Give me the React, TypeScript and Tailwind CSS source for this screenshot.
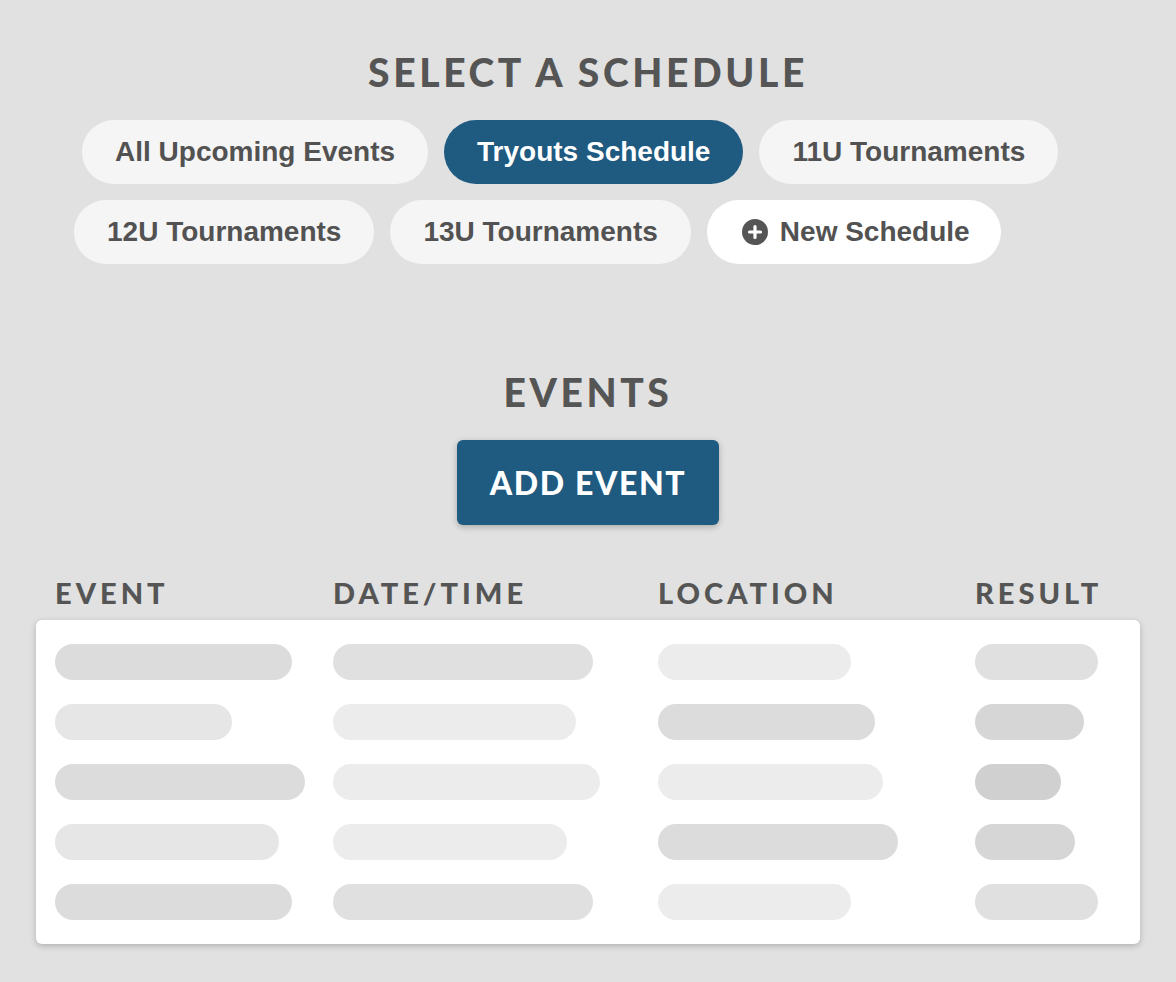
import React from "react";

const heading = "font-['Lato',sans-serif] font-black uppercase text-[#555555]";

function Pill({ label, active, white, icon }: { label: string; active?: boolean; white?: boolean; icon?: boolean }) {
  const base =
    "h-[64px] rounded-full flex items-center justify-center gap-[12px] font-['Liberation_Sans',Arial,sans-serif] font-bold text-[28px]";
  const color = active
    ? "bg-[#1f5a80] text-white"
    : white
    ? "bg-white text-[#525252]"
    : "bg-[#f5f5f5] text-[#525252]";
  return (
    <div className={`${base} ${color} ${icon ? "pl-[35px] pr-[31px]" : "px-[33px]"}`}>
      {icon && (
        <svg width="26" height="26" viewBox="0 0 26 26">
          <circle cx="13" cy="13" r="13" fill="#555555" />
          <path d="M13 7.5v11M7.5 13h11" stroke="#ffffff" strokeWidth="3.2" strokeLinecap="round" />
        </svg>
      )}
      <span>{label}</span>
    </div>
  );
}

const rows: { w: number; c: string }[][] = [
  [
    { w: 237, c: "bg-[#dcdcdc]" },
    { w: 260, c: "bg-[#e0e0e0]" },
    { w: 193, c: "bg-[#ececec]" },
    { w: 123, c: "bg-[#e0e0e0]" },
  ],
  [
    { w: 177, c: "bg-[#e6e6e6]" },
    { w: 243, c: "bg-[#ececec]" },
    { w: 217, c: "bg-[#dcdcdc]" },
    { w: 109, c: "bg-[#d6d6d6]" },
  ],
  [
    { w: 250, c: "bg-[#dcdcdc]" },
    { w: 267, c: "bg-[#ececec]" },
    { w: 225, c: "bg-[#ececec]" },
    { w: 86, c: "bg-[#d0d0d0]" },
  ],
  [
    { w: 224, c: "bg-[#e6e6e6]" },
    { w: 234, c: "bg-[#ececec]" },
    { w: 240, c: "bg-[#dcdcdc]" },
    { w: 100, c: "bg-[#d6d6d6]" },
  ],
  [
    { w: 237, c: "bg-[#dcdcdc]" },
    { w: 260, c: "bg-[#e0e0e0]" },
    { w: 193, c: "bg-[#ececec]" },
    { w: 123, c: "bg-[#e0e0e0]" },
  ],
];

export default function App() {
  return (
    <div className="min-h-[982px] w-full bg-[#e1e1e1] pt-[52px] pb-[38px]">
      <h1 className={`${heading} text-center text-[39px] leading-[40px] tracking-[3.6px]`}>Select a Schedule</h1>

      <div className="mt-[28px] flex flex-col gap-[16px]">
        <div className="flex gap-[16px] pl-[82px]">
          <Pill label="All Upcoming Events" />
          <Pill label="Tryouts Schedule" active />
          <Pill label="11U Tournaments" />
        </div>
        <div className="flex gap-[16px] pl-[74px]">
          <Pill label="12U Tournaments" />
          <Pill label="13U Tournaments" />
          <Pill label="New Schedule" white icon />
        </div>
      </div>

      <h2 className={`${heading} mt-[108px] text-center text-[39px] leading-[40px] tracking-[3.6px]`}>Events</h2>

      <div className="mt-[28px] flex justify-center">
        <button className="h-[85px] w-[262px] rounded-[6px] bg-[#1f5a80] text-white font-['Lato',sans-serif] font-black text-[32px] tracking-[1.6px] shadow-[0_2px_6px_rgba(0,0,0,0.25)]">
          ADD EVENT
        </button>
      </div>

      <div className={`${heading} mt-[52px] grid grid-cols-[278px_325px_317px_1fr] pl-[55px] text-[29px] leading-[32px] tracking-[4px]`}>
        <div>Event</div>
        <div>Date/Time</div>
        <div>Location</div>
        <div>Result</div>
      </div>

      <div className="mx-[36px] mt-[11px] rounded-[6px] bg-white px-[19px] py-[24px] shadow-[0_2px_6px_rgba(0,0,0,0.22)] flex flex-col gap-[24px]">
        {rows.map((r, i) => (
          <div key={i} className="grid grid-cols-[278px_325px_317px_1fr]">
            {r.map((b, j) => (
              <div key={j} className={`h-[36px] rounded-full ${b.c}`} style={{ width: b.w }} />
            ))}
          </div>
        ))}
      </div>
    </div>
  );
}
